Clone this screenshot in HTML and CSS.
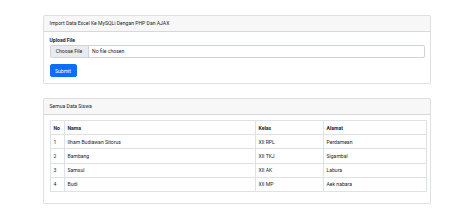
FILE: index.html
```html
<!DOCTYPE html>
<html lang="id">
<head>
    <meta charset="UTF-8">
    <meta name="viewport" content="width=device-width, initial-scale=1.0">
    <title>Import Data Excel</title>
    <link rel="stylesheet" href="styles.css">
</head>
<body>
    <div class="container">
        <div class="card">
            <div class="card-header">Import Data Excel Ke MySQLi Dengan PHP Dan AJAX</div>
            <div class="card-body">
                <form id="formUpload">
                    <div class="form-label">Upload File</div>
                    <label class="file-input">
                        <input type="file" name="file" class="file-hidden">
                        <span class="file-button">Choose File</span>
                        <span class="file-name">No file chosen</span>
                    </label>
                    <button type="submit" class="btn-primary">Submit</button>
                </form>
            </div>
        </div>

        <div class="card card-data">
            <div class="card-header">Semua Data Siswa</div>
            <div class="card-body">
                <table class="table">
                    <thead>
                        <tr>
                            <th class="col-no">No</th>
                            <th class="col-nama">Nama</th>
                            <th class="col-kelas">Kelas</th>
                            <th class="col-alamat">Alamat</th>
                        </tr>
                    </thead>
                    <tbody>
                        <tr><td>1</td><td>Ilham Budiawan Sitorus</td><td>XII RPL</td><td>Perdamean</td></tr>
                        <tr><td>2</td><td>Bambang</td><td>XII TKJ</td><td>Sigambal</td></tr>
                        <tr><td>3</td><td>Samsul</td><td>XII AK</td><td>Labura</td></tr>
                        <tr><td>4</td><td>Budi</td><td>XII MP</td><td>Aek nabara</td></tr>
                    </tbody>
                </table>
            </div>
        </div>
    </div>
</body>
</html>
```

FILE: styles.css
```css
body {
    margin: 0;
    font-family: Roboto, "Noto Sans", sans-serif;
    font-size: 5.1px;
    line-height: 1.5;
    color: #212529;
    background-color: #fff;
}

.container {
    width: 388px;
    margin: 15px auto 0;
}

.card {
    border: 1px solid rgba(0, 0, 0, 0.125);
    border-radius: 2px;
    background-color: #fff;
}

.card-data {
    margin-top: 14.5px;
}

.card-header {
    padding: 3px 5.5px;
    line-height: 8.5px;
    background-color: rgba(0, 0, 0, 0.03);
    border-bottom: 1px solid rgba(0, 0, 0, 0.125);
}

.card-body {
    padding: 5.5px;
}

.form-label {
    font-weight: bold;
    line-height: 7px;
    margin-bottom: 1px;
}

.file-input {
    display: flex;
    height: 13px;
    border: 1px solid #ced4da;
    border-radius: 2px;
    box-sizing: border-box;
    overflow: hidden;
    cursor: pointer;
}

.file-hidden {
    display: none;
}

.file-button {
    width: 37px;
    display: flex;
    align-items: center;
    justify-content: center;
    background-color: #e9ecef;
    border-right: 1px solid #ced4da;
}

.file-name {
    display: flex;
    align-items: center;
    padding-left: 3.5px;
}

.btn-primary {
    display: block;
    margin-top: 6px;
    width: 27px;
    height: 13px;
    padding: 0;
    font-family: inherit;
    font-size: 5.1px;
    color: #fff;
    background-color: #0d6efd;
    border: 1px solid #0d6efd;
    border-radius: 2px;
    cursor: pointer;
}

.table {
    width: 100%;
    border-collapse: collapse;
    table-layout: fixed;
    margin-bottom: 5.5px;
}

.table th,
.table td {
    border: 1px solid #dee2e6;
    padding: 2.5px 3px;
    line-height: 8.2px;
    text-align: left;
    box-sizing: border-box;
}

.col-no { width: 14px; }
.col-nama { width: 191px; }
.col-kelas { width: 68px; }
.col-alamat { width: 103px; }
```
